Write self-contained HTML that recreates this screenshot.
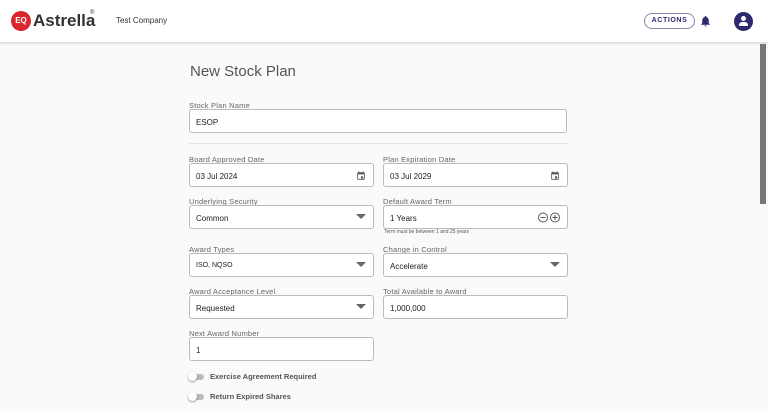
<!DOCTYPE html>
<html><head><style>
body{margin:0;width:768px;height:409px;overflow:hidden;background:#fafafa;font-family:"Liberation Sans",sans-serif;position:relative}
.hdr{position:absolute;left:0;top:0;width:768px;height:42px;background:#fff;box-shadow:0 1px 3px rgba(0,0,0,.18)}
.a{position:absolute}
.lbl{position:absolute;font-size:7.5px;color:#666;letter-spacing:.2px}
.inp{position:absolute;height:22px;border:1px solid #bbb;border-radius:3px;background:#fff;box-sizing:border-box;font-size:8px;color:#222;padding:7px 0 0 6px}
.tri{position:absolute;right:7px;top:8px;width:0;height:0;border-left:5px solid transparent;border-right:5px solid transparent;border-top:5px solid #666}
.tg{position:absolute;left:189px;width:15px;height:6px;border-radius:3px;background:#bbb}
.tg:after{content:"";position:absolute;left:-1px;top:-2px;width:9px;height:9px;border-radius:50%;background:#fff;box-shadow:0 1px 2px rgba(0,0,0,.4)}
.tl{position:absolute;left:210px;font-size:7.5px;font-weight:bold;color:#555}
</style></head><body>
<div class="hdr">
 <div class="a" style="left:11px;top:11px;width:20px;height:20px;border-radius:50%;background:#d8262e;color:#fff;font-size:8px;font-weight:bold;text-align:center;line-height:20px">EQ</div>
 <div class="a" style="left:33px;top:11px;font-size:17px;font-weight:bold;color:#333">Astrella</div>
 <div class="a" style="left:90px;top:10px;font-size:6px;color:#333">®</div>
 <div class="a" style="left:116px;top:16px;font-size:8px;color:#333">Test Company</div>
 <div class="a" style="left:644px;top:13px;width:51px;height:16px;border:1px solid #8885aa;border-radius:8px;box-sizing:border-box;font-size:7px;font-weight:bold;color:#2d2a6e;text-align:center;line-height:14px;letter-spacing:.6px">ACTIONS</div>
 <svg class="a" style="left:699px;top:14px" width="13" height="14" viewBox="0 0 24 24"><path fill="#2d2a6e" d="M12 22c1.1 0 2-.9 2-2h-4c0 1.1.9 2 2 2zm6-6v-5c0-3.1-1.6-5.6-4.5-6.3V4c0-.8-.7-1.5-1.5-1.5s-1.5.7-1.5 1.5v.7C7.6 5.4 6 7.9 6 11v5l-2 2v1h16v-1l-2-2z"/></svg>
 <div class="a" style="left:734px;top:12px;width:19px;height:19px;border-radius:50%;background:#2d2a6e"></div>
 <div class="a" style="left:741px;top:16px;width:5px;height:5px;border-radius:50%;background:#fff"></div>
 <div class="a" style="left:739px;top:22px;width:9px;height:4px;border-radius:4px 4px 1px 1px;background:#fff"></div>
</div>
<div class="a" style="left:760px;top:44px;width:6px;height:160px;background:#777"></div>
<div class="a" style="left:190px;top:63px;font-size:15px;color:#555">New Stock Plan</div>
<div class="lbl" style="left:189px;top:101px">Stock Plan Name</div>
<div class="inp" style="left:189px;top:109px;width:378px;height:24px;padding-top:8px">ESOP</div>
<div class="a" style="left:189px;top:143px;width:378px;height:1px;background:#e3e3e3"></div>
<div class="lbl" style="left:189px;top:155px">Board Approved Date</div>
<div class="inp" style="left:189px;top:163px;width:185px;height:24px;padding-top:8px">03 Jul 2024<svg class="a" style="right:7px;top:7px" width="10" height="10" viewBox="0 0 24 24"><path fill="#555" d="M19 3h-1V1h-2v2H8V1H6v2H5c-1.1 0-2 .9-2 2v14c0 1.1.9 2 2 2h14c1.1 0 2-.9 2-2V5c0-1.1-.9-2-2-2zm0 16H5V8h14v11zm-7-6h5v5h-5z"/></svg></div>
<div class="lbl" style="left:383px;top:155px">Plan Expiration Date</div>
<div class="inp" style="left:383px;top:163px;width:185px;height:24px;padding-top:8px">03 Jul 2029<svg class="a" style="right:7px;top:7px" width="10" height="10" viewBox="0 0 24 24"><path fill="#555" d="M19 3h-1V1h-2v2H8V1H6v2H5c-1.1 0-2 .9-2 2v14c0 1.1.9 2 2 2h14c1.1 0 2-.9 2-2V5c0-1.1-.9-2-2-2zm0 16H5V8h14v11zm-7-6h5v5h-5z"/></svg></div>
<div class="lbl" style="left:189px;top:197px">Underlying Security</div>
<div class="inp" style="left:189px;top:205px;width:185px;height:24px;padding-top:8px">Common<div class="tri"></div></div>
<div class="lbl" style="left:383px;top:197px">Default Award Term</div>
<div class="inp" style="left:383px;top:205px;width:185px;height:24px;padding-top:8px">1 Years
<svg class="a" style="right:6px;top:6px" width="23" height="11" viewBox="0 0 46 22"><circle cx="10" cy="11" r="9" fill="none" stroke="#555" stroke-width="2"/><path d="M5 11h10" stroke="#555" stroke-width="2"/><circle cx="34" cy="11" r="9" fill="none" stroke="#555" stroke-width="2"/><path d="M29 11h10M34 6v10" stroke="#555" stroke-width="2"/></svg></div>
<div class="a" style="left:384px;top:229px;font-size:5px;color:#555">Term must be between 1 and 25 years</div>
<div class="lbl" style="left:189px;top:245px">Award Types</div>
<div class="inp" style="left:189px;top:253px;width:185px;height:24px;padding-top:8px;font-size:7px">ISO, NQSO<div class="tri"></div></div>
<div class="lbl" style="left:383px;top:245px">Change in Control</div>
<div class="inp" style="left:383px;top:253px;width:185px;height:24px;padding-top:8px">Accelerate<div class="tri"></div></div>
<div class="lbl" style="left:189px;top:287px">Award Acceptance Level</div>
<div class="inp" style="left:189px;top:295px;width:185px;height:24px;padding-top:8px">Requested<div class="tri"></div></div>
<div class="lbl" style="left:383px;top:287px">Total Available to Award</div>
<div class="inp" style="left:383px;top:295px;width:185px;height:24px;padding-top:8px">1,000,000</div>
<div class="lbl" style="left:189px;top:329px">Next Award Number</div>
<div class="inp" style="left:189px;top:337px;width:185px;height:24px;padding-top:8px">1</div>
<div class="tg" style="top:374px"></div><div class="tl" style="top:372px">Exercise Agreement Required</div>
<div class="tg" style="top:394px"></div><div class="tl" style="top:392px">Return Expired Shares</div>
</body></html>
